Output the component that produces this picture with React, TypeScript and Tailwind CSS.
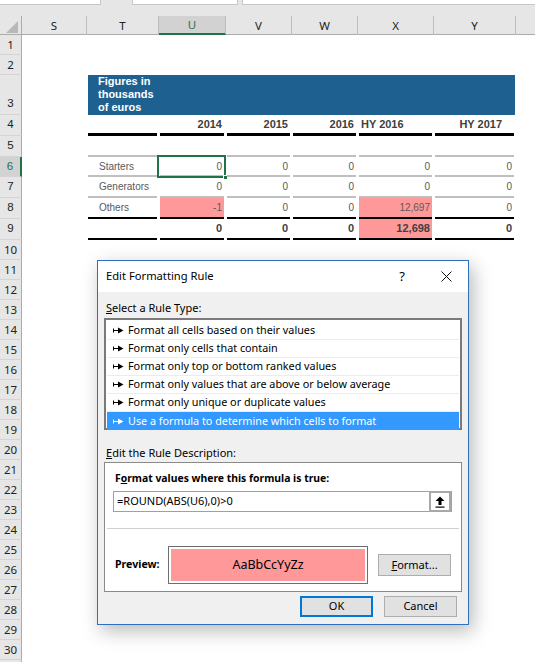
import React from "react";

const COLS = "grid grid-cols-[22px_65px_72px_67px_66px_66px_76px_82px_1fr]";
const LETTERS = ["S", "T", "U", "V", "W", "X", "Y", ""];

const ROW_H: Record<number, string> = {
  3: "h-[40px]",
  4: "h-[21px]",
  5: "h-[21px]",
  7: "h-[21px]",
  8: "h-[21px]",
  9: "h-[21px]",
};

const GRAY = "border-b-2 border-[#bfbfbf]";
const BLACK = "border-b-2 border-black";

// T..Y content for rows 4-9
const TABLE: Record<number, { line: string; bold?: boolean; label?: string; vals: string[]; pink?: number[] }> = {
  4: { line: "border-b-[3px] border-black", bold: true, vals: ["2014", "2015", "2016", "HY 2016", "HY 2017"] },
  5: { line: GRAY, vals: ["", "", "", "", ""] },
  6: { line: GRAY, label: "Starters", vals: ["0", "0", "0", "0", "0"] },
  7: { line: GRAY, label: "Generators", vals: ["0", "0", "0", "0", "0"] },
  8: { line: BLACK, label: "Others", vals: ["-1", "0", "0", "12,697", "0"], pink: [0, 3] },
  9: { line: BLACK, bold: true, vals: ["0", "0", "0", "12,698", "0"], pink: [3] },
};

const RULES = [
  "Format all cells based on their values",
  "Format only cells that contain",
  "Format only top or bottom ranked values",
  "Format only values that are above or below average",
  "Format only unique or duplicate values",
  "Use a formula to determine which cells to format",
];

function RuleArrow({ color }: { color: string }) {
  return (
    <svg width="11" height="7" viewBox="0 0 11 7" className="shrink-0">
      <rect x="0" y="1.5" width="1" height="4" fill={color} />
      <rect x="0" y="3" width="6" height="1" fill={color} />
      <polygon points="5,0.5 10.5,3.5 5,6.5" fill={color} />
    </svg>
  );
}

function TableRow({ n }: { n: number }) {
  const r = TABLE[n];
  return (
    <>
      <div className={`ml-px mr-[2px] flex items-center pl-[11px] ${r.line}`}>
        <span className="text-[10px] text-[#595959]">{r.label}</span>
      </div>
      {r.vals.map((v, i) => (
        <div
          key={i}
          className={`relative ml-px mr-[2px] flex items-center ${r.line} ${
            r.pink?.includes(i) ? "bg-[#ff9999]" : ""
          } ${n === 4 && i === 3 ? "justify-start pl-[2px]" : n === 4 && i === 4 ? "justify-end pr-[12px]" : "justify-end pr-[2px]"}`}
        >
          <span className={r.bold ? "text-[11px] font-bold text-[#404040]" : "text-[10px] text-[#595959]"}>{v}</span>
          {n === 6 && i === 0 && (
            <>
              <div className="absolute -left-[3px] -right-[2px] -top-[2px] -bottom-[3px] border-2 border-[#217346]" />
              <div className="absolute -right-[4px] -bottom-[5px] h-[5px] w-[5px] border border-white bg-[#217346]" />
            </>
          )}
        </div>
      ))}
    </>
  );
}

function SheetRow({ n }: { n: number }) {
  const selected = n === 6;
  return (
    <div className={`${COLS} ${ROW_H[n] ?? "h-[20px]"}`}>
      <div
        className={`flex items-center justify-center border-b border-[#d4d4d4] text-[11.5px] ${
          selected
            ? "border-r-2 border-r-[#217346] bg-[#d2d2d2] text-[#217346]"
            : "border-r border-r-[#ababab] bg-[#e6e6e6] text-[#222]"
        } ${n === 3 ? "items-end pb-[2px]" : ""}`}
      >
        {n}
      </div>
      <div />
      {n === 3 ? (
        <div className="col-span-6 ml-px mr-px bg-[#1e6190] pl-[10px]">
          <div className="w-[66px] text-[11px] font-bold leading-[13px] text-white">Figures in thousands of euros</div>
        </div>
      ) : TABLE[n] ? (
        <TableRow n={n} />
      ) : (
        <div className="col-span-6" />
      )}
      <div />
    </div>
  );
}

function Dialog() {
  return (
    <div className="absolute left-[97px] top-[260px] flex h-[365px] w-[372px] flex-col border border-[#2f6fc0] bg-[#f0f0f0] shadow-[4px_6px_18px_rgba(0,0,0,0.28)] [font-family:'Noto_Sans',sans-serif]">
      {/* title bar */}
      <div className="flex h-[31px] shrink-0 items-center bg-white pl-[8px] pr-[16px]">
        <span className="text-[11.2px] text-black">Edit Formatting Rule</span>
        <span className="ml-auto mr-[36px] text-[13px] text-black">?</span>
        <svg width="11" height="11" viewBox="0 0 11 11">
          <path d="M0.5 0.5 L10.5 10.5 M10.5 0.5 L0.5 10.5" stroke="#111" strokeWidth="1" />
        </svg>
      </div>

      <div className="flex flex-1 flex-col px-[6px]">
        <div className="mt-[8px] pl-[2px] text-[11px] leading-[16px] text-black">
          <span className="underline">S</span>elect a Rule Type:
        </div>
        {/* rule list */}
        <div className="mt-[2px] h-[112px] border-2 border-[#7a7a7a] bg-white px-px pt-[2px]">
          {RULES.map((r, i) => {
            const sel = i === RULES.length - 1;
            return (
              <div
                key={r}
                className={`flex h-[18px] items-center gap-[4px] pl-[6px] text-[10.8px] ${
                  sel ? "bg-[#3399ff] text-white" : "border-b border-[#ececec] text-black"
                }`}
              >
                <RuleArrow color={sel ? "#fff" : "#000"} />
                <span>{r}</span>
              </div>
            );
          })}
        </div>

        <div className="mt-[15px] pl-[2px] text-[11px] leading-[16px] text-black">
          <span className="underline">E</span>dit the Rule Description:
        </div>
        {/* description box */}
        <div className="mt-[1px] flex h-[130px] flex-col border border-[#8a8a8a] bg-white">
          <div className="mt-[7px] pl-[10px] text-[10.4px] font-bold leading-[16px] text-black">
            F<span className="underline">o</span>rmat values where this formula is true:
          </div>
          <div className="ml-[8px] mr-[9px] mt-[5px] flex h-[21px] items-center border border-[#a0a0a0] bg-white">
            <span className="pl-[3px] text-[11px] text-black">=ROUND(ABS(U6),0)&gt;0</span>
            <div className="ml-auto flex h-[21px] w-[22px] items-center justify-center border-2 border-[#a8a8a8] bg-white">
              <svg width="10" height="12" viewBox="0 0 10 12">
                <polygon points="5,0.5 9.5,5 6.5,5 6.5,9 3.5,9 3.5,5 0.5,5" fill="#000" />
                <rect x="0.5" y="10.5" width="9" height="1.2" fill="#000" />
              </svg>
            </div>
          </div>
          <div className="mx-[2px] mt-[16px] h-px bg-[#d0d0d0]" />
          <div className="mt-[17px] flex items-center pl-[10px]">
            <span className="w-[53px] text-[10.6px] font-bold text-black">Preview:</span>
            <div className="flex h-[38px] w-[200px] border border-[#6e6e6e] bg-white p-[2px]">
              <div className="flex flex-1 items-center justify-center bg-[#ff9999] text-[12.5px] text-black">AaBbCcYyZz</div>
            </div>
            <div className="ml-[10px] flex h-[22px] w-[73px] items-center justify-center border border-[#adadad] bg-[#e1e1e1] text-[11px] text-black">
              <span className="underline">F</span>ormat...
            </div>
          </div>
        </div>

        <div className="mt-[4px] flex justify-end gap-[11px] pr-[5px]">
          <div className="flex h-[21px] w-[73px] items-center justify-center border-2 border-[#0078d7] bg-[#e1e1e1] text-[11px] text-black">
            OK
          </div>
          <div className="flex h-[21px] w-[73px] items-center justify-center border border-[#adadad] bg-[#e1e1e1] text-[11px] text-black">
            Cancel
          </div>
        </div>
      </div>
    </div>
  );
}

export default function App() {
  const rows = Array.from({ length: 30 }, (_, i) => i + 1);
  return (
    <div className="relative h-[662px] w-[535px] overflow-hidden bg-white [font-family:'Liberation_Sans',Arial,sans-serif]">
      {/* ribbon remnants */}
      <div className="flex h-[16px] bg-[#e6e6e6]">
        <div className="h-[5px] w-[101px] border-b border-r border-[#c6c6c6] bg-white" />
        <div className="ml-[31px] h-[5px] w-[106px] border-x border-b border-[#c6c6c6] bg-white" />
        <div className="ml-[4px] h-[5px] flex-1 border-b border-l border-[#c6c6c6] bg-white" />
      </div>
      {/* column headers */}
      <div className={`${COLS} h-[19px] border-b border-[#ababab] bg-[#e6e6e6] [font-family:'Noto_Sans',sans-serif]`}>
        <div className="relative border-r border-[#ababab]">
          <svg width="12" height="12" viewBox="0 0 12 12" className="absolute bottom-[2px] right-[3px]">
            <polygon points="12,0 12,12 0,12" fill="#b8b8b8" />
          </svg>
        </div>
        {LETTERS.map((l, i) => (
          <div
            key={i}
            className={`flex items-center justify-center text-[11.5px] ${
              l === "U"
                ? "border-b-2 border-b-[#217346] bg-[#d2d2d2] text-[#217346]"
                : "text-[#222]"
            } ${i < 7 ? "border-r border-r-[#bdbdbd]" : ""}`}
          >
            {l}
          </div>
        ))}
      </div>
      <div className="[font-family:'Noto_Sans',sans-serif]">
        {rows.map((n) => (
          <div key={n} className={TABLE[n] || n === 3 ? "[font-family:'Liberation_Sans',Arial,sans-serif]" : ""}>
            <SheetRow n={n} />
          </div>
        ))}
        <div className={`${COLS} h-[10px]`}>
          <div className="border-r border-[#ababab] bg-[#e6e6e6]" />
        </div>
      </div>
      <Dialog />
    </div>
  );
}
